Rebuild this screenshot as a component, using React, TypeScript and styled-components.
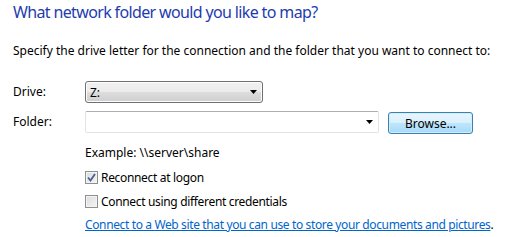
import React from 'react';
import styled, {createGlobalStyle} from 'styled-components';

const GlobalStyle = createGlobalStyle`
  html, body {
    margin: 0;
    padding: 0;
    background: #ffffff;
  }
  body {
    font-family: "Noto Sans", "Open Sans", sans-serif;
    font-size: 12px;
    color: #000000;
  }
`;

function DownArrow() {
  return (
    <svg width="7" height="4" viewBox="0 0 7 4">
      <path d="M0 0 H7 L3.5 4 Z" fill="#000" />
    </svg>
  );
}

function CheckMark() {
  return (
    <svg width="9" height="9" viewBox="0 0 9 9">
      <path
        d="M1 4.5 L3.5 7.5 L8 1"
        fill="none"
        stroke="#4a5f97"
        strokeWidth="1.8"
      />
    </svg>
  );
}

export default function App() {
  return (
    <Page>
      <GlobalStyle />
      <Heading>What network folder would you like to map?</Heading>
      <Intro>
        Specify the drive letter for the connection and the folder that you
        want to connect to:
      </Intro>
      <Form>
        <Label>Drive:</Label>
        <DriveCombo>
          <span>Z:</span>
          <DownArrow />
        </DriveCombo>
        <Label>Folder:</Label>
        <FolderRow>
          <FolderCombo>
            <DownArrow />
          </FolderCombo>
          <BrowseButton>Browse...</BrowseButton>
        </FolderRow>
        <span />
        <Options>
          <Example>Example: \\server\share</Example>
          <CheckRow>
            <Box>
              <CheckMark />
            </Box>
            Reconnect at logon
          </CheckRow>
          <CheckRow>
            <Box />
            Connect using different credentials
          </CheckRow>
          <LinkLine>
            <Link>
              Connect to a Web site that you can use to store your documents
              and pictures
            </Link>
            .
          </LinkLine>
        </Options>
      </Form>
    </Page>
  );
}

const Page = styled.div`
  display: flex;
  flex-direction: column;
  padding: 2px 0 0 13px;
  width: 507px;
  height: 237px;
  box-sizing: border-box;
  overflow: hidden;
`;

const Heading = styled.div`
  font-size: 16px;
  line-height: 20px;
  letter-spacing: -0.64px;
  color: #1e3caf;
  white-space: nowrap;
`;

const Intro = styled.div`
  margin-top: 21px;
  line-height: 16px;
  white-space: nowrap;
`;

const Form = styled.div`
  display: grid;
  grid-template-columns: 72px auto;
  row-gap: 7px;
  align-items: center;
  margin-top: 22px;
`;

const Label = styled.div`
  line-height: 16px;
`;

const DriveCombo = styled.div`
  display: flex;
  align-items: center;
  justify-content: space-between;
  width: 178px;
  height: 22px;
  box-sizing: border-box;
  padding: 0 5px 0 4px;
  border: 1px solid #707070;
  border-radius: 3px;
  background: linear-gradient(#f2f2f2 0%, #ebebeb 49%, #dddddd 50%, #cfcfcf 100%);
  box-shadow: inset 0 0 0 1px #fcfcfc;
`;

const FolderRow = styled.div`
  display: flex;
  align-items: center;
  gap: 9px;
`;

const FolderCombo = styled.div`
  display: flex;
  align-items: center;
  justify-content: flex-end;
  width: 294px;
  height: 22px;
  box-sizing: border-box;
  padding-right: 5px;
  border: 1px solid #e2e3ea;
  border-top-color: #abadb3;
  border-radius: 2px;
  background: #ffffff;
`;

const BrowseButton = styled.div`
  display: flex;
  align-items: center;
  justify-content: center;
  width: 85px;
  height: 22px;
  margin-top: 2px;
  box-sizing: border-box;
  border: 1px solid #3c7fb1;
  border-radius: 3px;
  background: linear-gradient(#eaf6fd 0%, #d9f0fc 49%, #bee6fd 50%, #a7d9f5 100%);
  box-shadow: inset 0 0 0 1px #cdeefc;
`;

const Options = styled.div`
  display: flex;
  flex-direction: column;
  padding-top: 4px;
`;

const Example = styled.div`
  line-height: 16px;
`;

const CheckRow = styled.div`
  display: flex;
  align-items: center;
  gap: 3px;
  height: 16px;
  margin-top: 8px;
  letter-spacing: -0.33px;
`;

const Box = styled.div`
  display: flex;
  align-items: center;
  justify-content: center;
  width: 13px;
  height: 13px;
  box-sizing: border-box;
  border: 1px solid #8e8f8f;
  background: linear-gradient(135deg, #dcdcdc 0%, #f4f4f4 100%);
  box-shadow: inset 0 0 0 1px #f4f4f4;
`;

const LinkLine = styled.div`
  line-height: 16px;
  margin-top: 8px;
  white-space: nowrap;
`;

const Link = styled.span`
  color: #0066cc;
  text-decoration: underline;
  letter-spacing: -0.37px;
`;
